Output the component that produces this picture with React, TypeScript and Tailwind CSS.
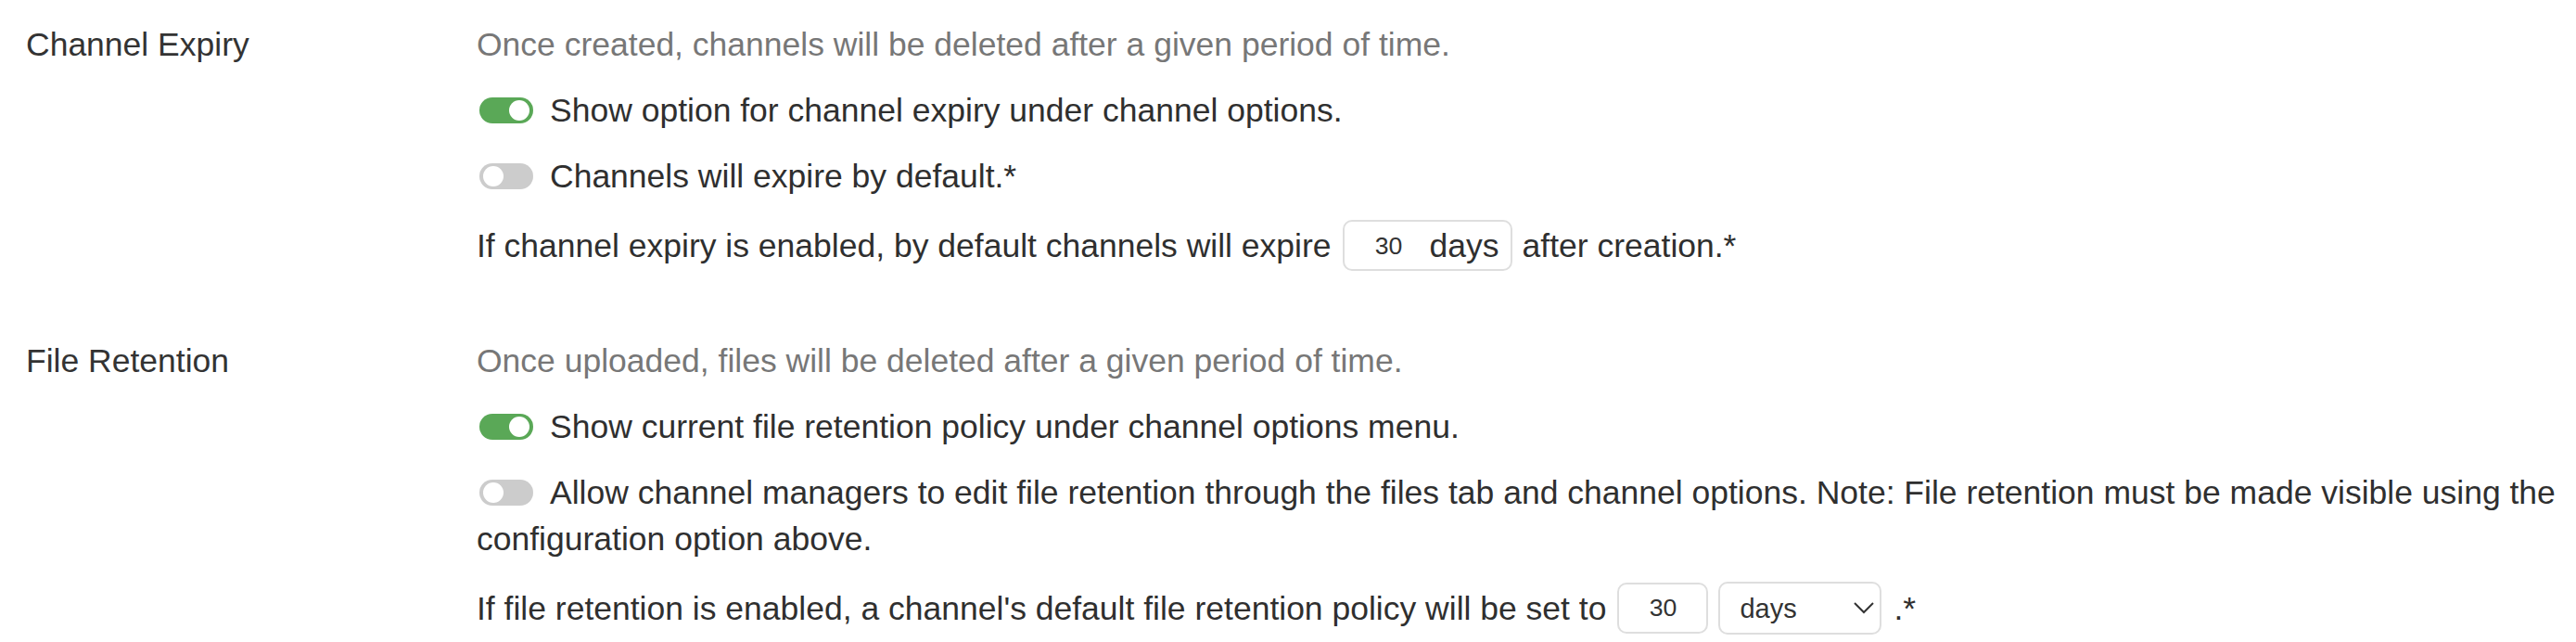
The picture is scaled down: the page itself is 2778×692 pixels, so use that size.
import React from "react"

function Toggle({ on }: { on: boolean }) {
  return (
    <span
      className={`relative inline-block align-[-2px] ml-[3px] mr-[18px] h-[28px] w-[58px] rounded-full ${
        on ? "bg-[#5aa857]" : "bg-[#cccccc]"
      }`}
    >
      <span
        className={`absolute top-[3px] h-[22px] w-[22px] rounded-full bg-white ${on ? "right-[4px]" : "left-[4px]"}`}
      />
    </span>
  )
}

function Section({ label, children, className = "" }: { label: string; children: React.ReactNode; className?: string }) {
  return (
    <div className={`flex ${className}`}>
      <div className="w-[514px] shrink-0 pl-[28px] text-[#333]">{label}</div>
      <div className="flex min-w-0 flex-1 flex-col gap-[21px] pr-[8px]">{children}</div>
    </div>
  )
}

export default function App() {
  return (
    <div
      className="min-h-screen bg-white pt-[23px] text-[35.5px] leading-[50px] text-[#2f2f2f]"
      style={{ fontFamily: '"Liberation Sans", Arial, Helvetica, sans-serif' }}
    >
      <Section label="Channel Expiry">
        <div className="text-[#777]">Once created, channels will be deleted after a given period of time.</div>
        <div>
          <Toggle on />
          Show option for channel expiry under channel options.
        </div>
        <div>
          <Toggle on={false} />
          Channels will expire by default.*
        </div>
        <div className="flex h-[57px] items-center">
          <span>If channel expiry is enabled, by default channels will expire</span>
          <div className="ml-[12px] flex h-[55px] w-[183px] items-center rounded-[10px] border-2 border-[#dedede] pl-[8px]">
            <input
              type="text"
              defaultValue="30"
              className="w-[80px] bg-transparent text-center text-[26.67px] text-[#333] outline-none"
            />
            <span className="ml-[4px]">days</span>
          </div>
          <span className="ml-[11px]">after creation.*</span>
        </div>
      </Section>

      <Section label="File Retention" className="mt-[71px]">
        <div className="text-[#777]">Once uploaded, files will be deleted after a given period of time.</div>
        <div>
          <Toggle on />
          Show current file retention policy under channel options menu.
        </div>
        <div>
          <Toggle on={false} />
          Allow channel managers to edit file retention through the files tab and channel options. Note: File retention
          must be made visible using the configuration option above.
        </div>
        <div className="flex h-[57px] items-center">
          <span>If file retention is enabled, a channel's default file retention policy will be set to</span>
          <input
            type="text"
            defaultValue="30"
            className="ml-[12px] h-[55px] w-[98px] rounded-[10px] border-2 border-[#dedede] bg-white text-center text-[26.67px] text-[#333] outline-none"
          />
          <div className="relative ml-[11px] h-[57px] w-[176px]">
            <select
              defaultValue="days"
              className="h-full w-full appearance-none rounded-[10px] border-2 border-[#dedede] bg-white pl-[21px] text-[29px] text-[#333] outline-none"
            >
              <option value="days">days</option>
              <option value="months">months</option>
              <option value="years">years</option>
            </select>
            <svg
              className="pointer-events-none absolute right-[7px] top-[21px] h-[14px] w-[24px]"
              viewBox="0 0 24 14"
              fill="none"
              stroke="#333"
              strokeWidth="2"
            >
              <path d="M2 2l10 10L22 2" />
            </svg>
          </div>
          <span className="ml-[13px]">.*</span>
        </div>
      </Section>
    </div>
  )
}
